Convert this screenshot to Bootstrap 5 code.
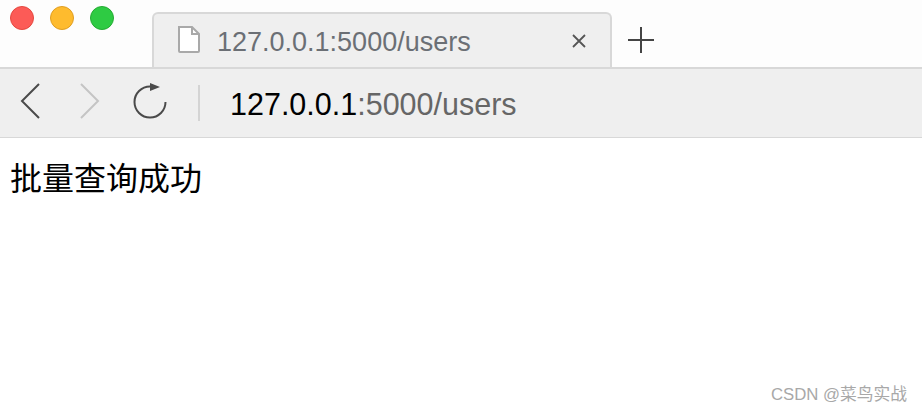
<!DOCTYPE html>
<html lang="zh-CN">
<head>
    <meta charset="UTF-8">
    <meta name="viewport" content="width=device-width, initial-scale=1.0">
    <title>127.0.0.1:5000/users</title>
    <link href="https://cdn.jsdelivr.net/npm/bootstrap@5.3.0/dist/css/bootstrap.min.css" rel="stylesheet">
    <style>
        html, body {
            height: 100%;
            overflow: hidden;
        }
        body {
            background-color: #fff;
            font-family: "Liberation Sans", "Noto Sans CJK SC", sans-serif;
        }
        .tabstrip {
            height: 69px;
            background-color: #fdfdfd;
            border-bottom: 2px solid #d8d8d8;
            padding-left: 10px;
        }
        .lights {
            gap: 16px;
            padding-top: 6px;
            width: 142px;
        }
        .light {
            width: 24px;
            height: 24px;
            border-radius: 50%;
            border: 1px solid;
        }
        .light-red { background-color: #fc5b57; border-color: #e5483f; }
        .light-yellow { background-color: #febb2e; border-color: #e09e22; }
        .light-green { background-color: #2ecb43; border-color: #25ab33; }
        .browser-tab {
            width: 460px;
            height: 55px;
            margin-top: 12px;
            padding: 0 24px 2px 24px;
            background-color: #efefef;
            border: 2px solid #d8d8d8;
            border-bottom: 0;
            border-radius: 6px 6px 0 0;
            color: #6b6f75;
            font-size: 27px;
        }
        .tab-title {
            margin: 5px 0 0 17px;
            line-height: 1;
        }
        .tab-close {
            margin-top: 3px;
        }
        .new-tab {
            margin: 27px 0 0 16px;
        }
        .toolbar {
            height: 69px;
            background-color: #efefef;
            border-bottom: 1px solid #d8d8d8;
            padding: 0 0 4px 20px;
        }
        .nav-forward {
            margin-left: 40px;
        }
        .nav-reload {
            margin-left: 33px;
        }
        .divider {
            width: 2px;
            height: 36px;
            background-color: #d4d4d4;
            margin: 3px 30px 0 31px;
        }
        .address {
            margin-top: 7px;
            font-size: 30.5px;
            color: #666;
            line-height: 1;
        }
        .address-host { color: #000; }
        .message {
            padding: 20px 0 0 10px;
            font-family: "Noto Sans CJK SC", sans-serif;
            font-size: 32px;
            line-height: 36px;
            color: #000;
        }
        .watermark {
            padding: 0 15px 7px 0;
            font-family: "Liberation Sans", "Noto Sans CJK SC", sans-serif;
            font-size: 16.75px;
            line-height: 24px;
            color: #a8a8a8;
        }
    </style>
</head>
<body class="d-flex flex-column">
    <div class="tabstrip d-flex flex-shrink-0">
        <div class="lights d-flex flex-shrink-0">
            <span class="light light-red"></span>
            <span class="light light-yellow"></span>
            <span class="light light-green"></span>
        </div>
        <div class="browser-tab d-flex align-items-center">
            <svg class="flex-shrink-0" width="22" height="27" viewBox="0 0 22 27" fill="none" stroke="#a9a9a9" stroke-width="2">
                <path d="M1 1h13l7 7v17a1 1 0 0 1-1 1H2a1 1 0 0 1-1-1z" fill="#fff"/>
                <path d="M14 1v7h7"/>
            </svg>
            <span class="tab-title flex-grow-1">127.0.0.1:5000/users</span>
            <svg class="tab-close flex-shrink-0" width="14" height="14" viewBox="0 0 14 14" stroke="#555" stroke-width="1.8">
                <path d="M1 1l12 12M13 1L1 13"/>
            </svg>
        </div>
        <svg class="new-tab" width="26" height="26" viewBox="0 0 26 26" stroke="#444" stroke-width="2">
            <path d="M13 0v26M0 13h26"/>
        </svg>
    </div>

    <div class="toolbar d-flex align-items-center flex-shrink-0">
        <svg width="20" height="36" viewBox="0 0 20 36" fill="none" stroke="#4a4a4a" stroke-width="2">
            <path d="M19 1L2 18l17 17"/>
        </svg>
        <svg class="nav-forward" width="20" height="36" viewBox="0 0 20 36" fill="none" stroke="#c4c4c4" stroke-width="2">
            <path d="M1 1l17 17L1 35"/>
        </svg>
        <svg class="nav-reload" width="34" height="36" viewBox="0 0 34 36" fill="none" stroke="#4a4a4a" stroke-width="2">
            <path d="M17 3.500A15.500 15.500 0 1 0 32.500 19"/>
            <path d="M17 0l10 4-10 4z" fill="#4a4a4a" stroke="none"/>
        </svg>
        <span class="divider"></span>
        <span class="address"><span class="address-host">127.0.0.1</span>:5000/users</span>
    </div>

    <div class="message flex-grow-1">批量查询成功</div>
    <div class="watermark text-end">CSDN @菜鸟实战</div>

    <script src="https://cdn.jsdelivr.net/npm/bootstrap@5.3.0/dist/js/bootstrap.bundle.min.js"></script>
</body>
</html>
